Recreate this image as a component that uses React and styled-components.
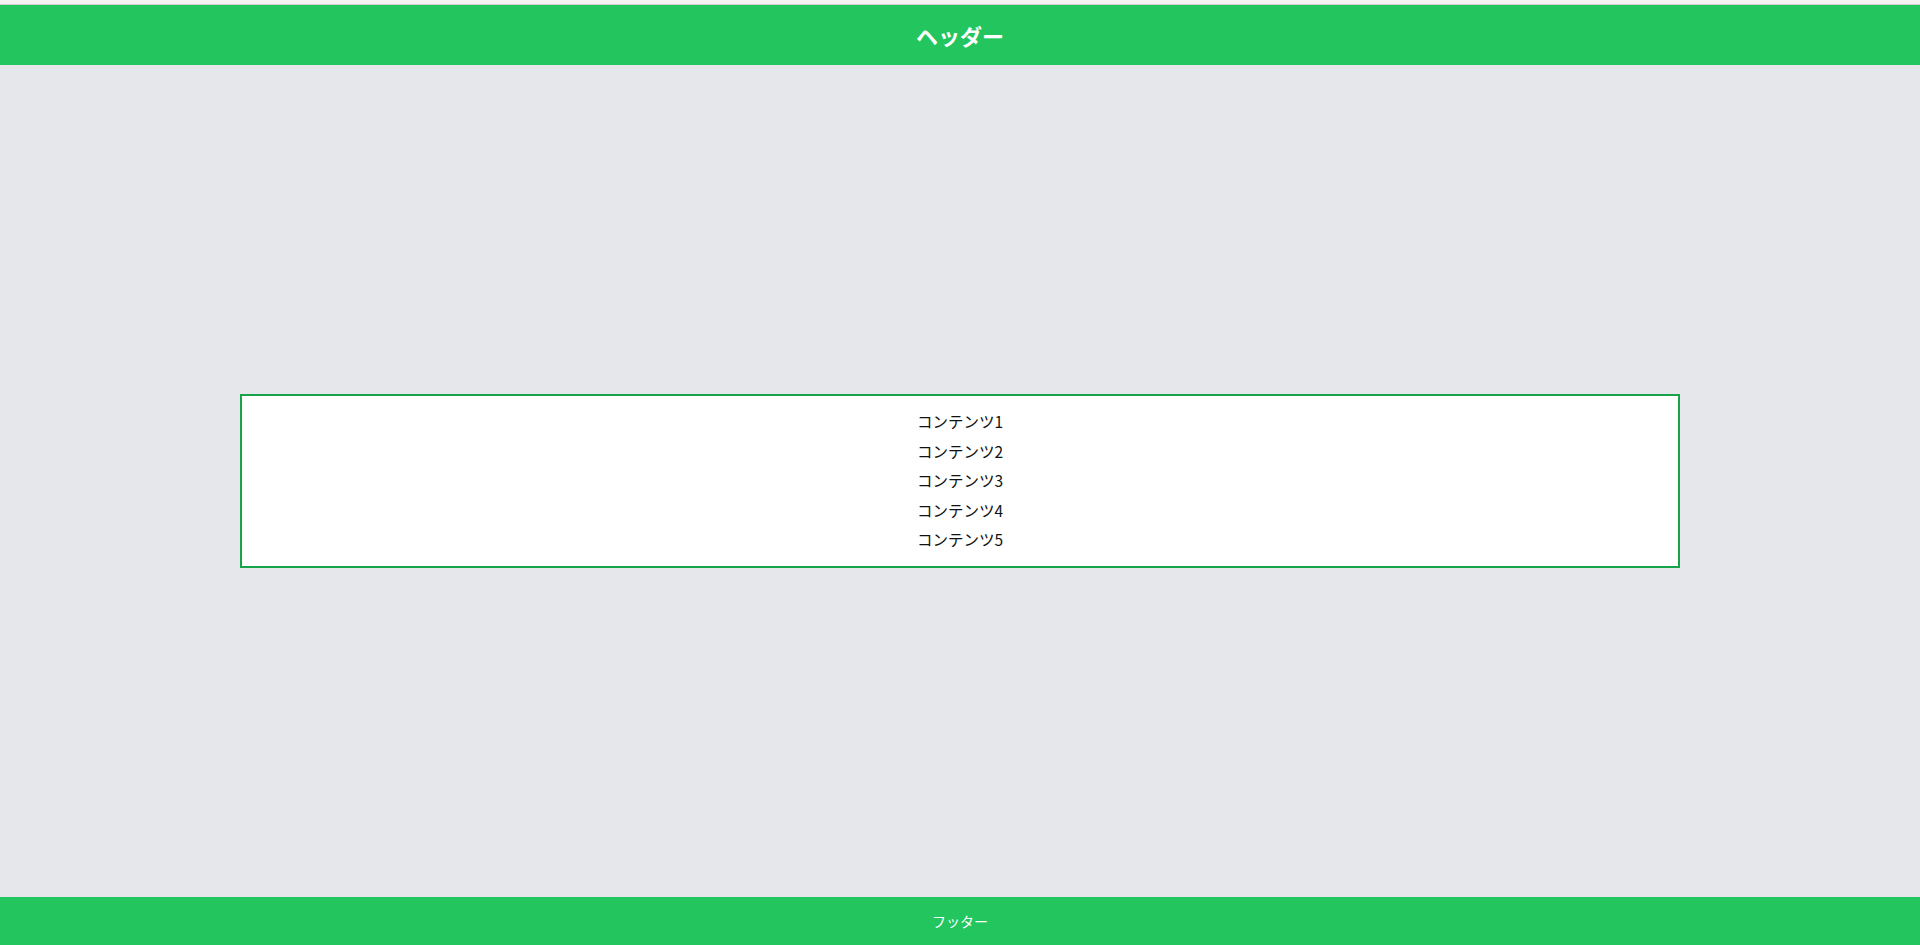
import React from 'react';
import styled, { createGlobalStyle } from 'styled-components';

const GlobalStyle = createGlobalStyle`
    html, body {
        margin: 0;
        padding: 0;
    }
    body {
        font-family: "Noto Sans CJK JP", "Noto Sans", sans-serif;
        background: #e5e7eb;
    }
`

const Page = styled.div`
    display: flex;
    flex-direction: column;
    height: 945px;
`

const TopEdge = styled.div`
    height: 4px;
    background: #f3f3f3;
    border-bottom: 1px solid #cfcfcf;
`

const Header = styled.header`
    height: 60px;
    display: flex;
    align-items: center;
    justify-content: center;
    background: #22c55e;
    color: #fff;
    font-size: 22px;
    font-weight: 700;
`

const Main = styled.main`
    flex: 1;
    display: flex;
    align-items: center;
    justify-content: center;
`

const ContentBox = styled.div`
    width: 75%;
    box-sizing: border-box;
    background: #fff;
    border: 2px solid #16a34a;
    padding: 11.5px 0;
    text-align: center;
    color: #111;
    font-size: 15.5px;
`

const Item = styled.div`
    line-height: 29.6px;
`

const Footer = styled.footer`
    height: 48px;
    display: flex;
    align-items: center;
    justify-content: center;
    background: #22c55e;
    color: #fff;
    font-size: 14px;
`

const contents = ['コンテンツ1', 'コンテンツ2', 'コンテンツ3', 'コンテンツ4', 'コンテンツ5'];

const App = () => {
    return (
        <>
            <GlobalStyle />
            <Page>
                <TopEdge />
                <Header>ヘッダー</Header>
                <Main>
                    <ContentBox>
                        {
                            contents.map((text) => (
                                <Item key={text}>{text}</Item>
                            ))
                        }
                    </ContentBox>
                </Main>
                <Footer>フッター</Footer>
            </Page>
        </>
    )
}

export default App;
